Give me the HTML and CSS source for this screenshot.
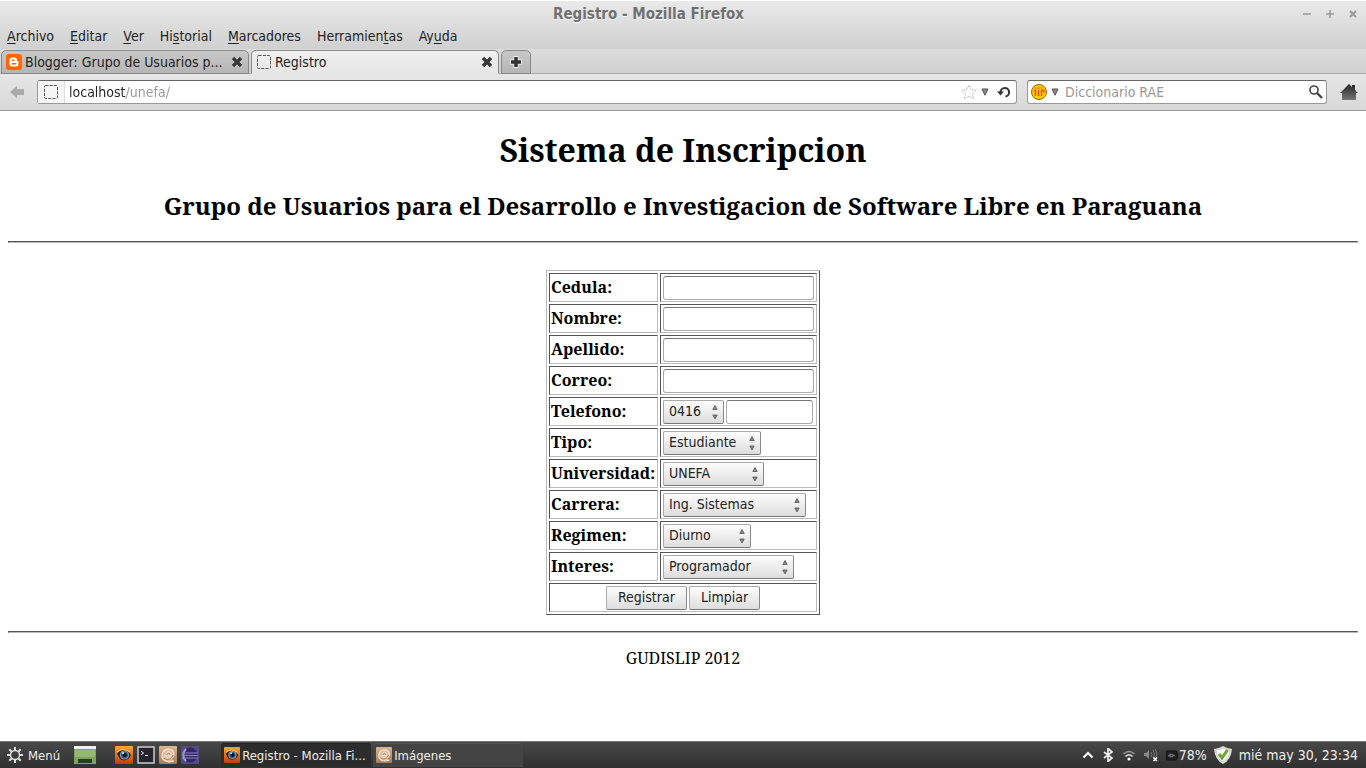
FILE: index.html
```html
<!DOCTYPE html>
<html lang="es">
<head>
  <meta charset="UTF-8">
  <title>Registro</title>
  <link rel="stylesheet" href="styles.css">
</head>
<body>
  <!-- Shared icons -->
  <svg class="sprite" aria-hidden="true">
    <defs>
      <linearGradient id="orange" x1="0" y1="0" x2="0" y2="1"><stop offset="0" stop-color="#f9a832"/><stop offset="1" stop-color="#c43c06"/></linearGradient>
      <linearGradient id="sand" x1="0" y1="0" x2="0" y2="1"><stop offset="0" stop-color="#d9b795"/><stop offset="1" stop-color="#a97b55"/></linearGradient>
      <linearGradient id="dark" x1="0" y1="0" x2="0" y2="1"><stop offset="0" stop-color="#222"/><stop offset="1" stop-color="#777"/></linearGradient>
      <symbol id="eye" viewBox="0 0 18 18">
        <rect width="18" height="18" rx="1" fill="url(#orange)"/>
        <path d="M2 8C5 3 12 2 16 9C14 14 9 16 5 13Z" fill="#33261c"/>
        <path d="M2 6Q8 1 15 6" fill="none" stroke="#ffd06a"/>
        <circle cx="9.500" cy="9" r="4.600" fill="#7d9cc0"/>
        <circle cx="9.500" cy="9" r="3.500" fill="#35587f"/>
        <circle cx="9.500" cy="9" r="2" fill="#080b12"/>
        <circle cx="8" cy="7" r="1" fill="#dce9f5"/>
      </symbol>
      <symbol id="shell" viewBox="0 0 18 18">
        <rect width="18" height="18" rx="1" fill="url(#sand)"/>
        <path d="M15 15C5 18 1 12 4 6C7 1 15 3 15 8C15 13 8 14 7 9C7 6 11 5 12 8C12 10 10 11 9 9" fill="#dcc0a4" stroke="#f3e4d3" stroke-width="1.200"/>
        <path d="M5 12C8 15 13 13 14 9M8 9C8 7 11 6 11 9" fill="none" stroke="#a77b5b"/>
      </symbol>
      <symbol id="arrows" viewBox="0 0 6 16"><path d="M.8 5.500L3 1.500L5.200 5.500ZM.8 11L3 15L5.200 11Z" fill="#888" stroke="#555" stroke-width=".8"/></symbol>
      <symbol id="down" viewBox="0 0 8 8"><path d="M1 1H7L4 7.200Z" fill="#888" stroke="#555"/></symbol>
      <symbol id="close" viewBox="0 0 12 12"><path d="M3 3L9 9M9 3L3 9" stroke="#fff" stroke-width="5" opacity=".4"/><path d="M2 2L10 10M10 2L2 10" stroke="#383838" stroke-width="3.500"/></symbol>
      <symbol id="blank" viewBox="0 0 14 14"><rect x=".5" y=".5" width="13" height="13" rx="1" fill="none" stroke="#555" stroke-dasharray="3 1.300"/></symbol>
    </defs>
  </svg>

  <!-- Browser window -->
  <header class="browser">
    <div class="titlebar">
      <span class="title">Registro - Mozilla Firefox</span>
      <div class="window-buttons">
        <button aria-label="Minimizar"><svg viewBox="0 0 8 8"><path d="M0 4H8" stroke="#999" stroke-width="1.500"/></svg></button>
        <button aria-label="Maximizar"><svg viewBox="0 0 8 8"><path d="M0 4H8M4 0V8" stroke="#999" stroke-width="1.500"/></svg></button>
        <button aria-label="Cerrar"><svg viewBox="0 0 8 8"><path d="M1 1L7 7M7 1L1 7" stroke="#999" stroke-width="2"/></svg></button>
      </div>
    </div>

    <nav class="menubar">
      <a href="#"><u>A</u>rchivo</a>
      <a href="#"><u>E</u>ditar</a>
      <a href="#"><u>V</u>er</a>
      <a href="#">Hi<u>s</u>torial</a>
      <a href="#"><u>M</u>arcadores</a>
      <a href="#">Herramien<u>t</u>as</a>
      <a href="#">Ay<u>u</u>da</a>
    </nav>

    <div class="tabs">
      <div class="tab">
        <svg class="icon16" viewBox="0 0 16 16"><rect width="16" height="16" rx="3" fill="#f60"/><path d="M6 3.500H8.500Q11 3.500 11 6V6.500Q11 7 11.500 7H12Q12.500 7 12.500 8V10Q12.500 12.500 10 12.500H6Q3.500 12.500 3.500 10V6Q3.500 3.500 6 3.500Z" fill="#fff"/><path d="M6.200 6.200H8M6.200 9.800H9.800" stroke="#f60" stroke-width="1.400" stroke-linecap="round"/></svg>
        <span class="tab-label">Blogger: Grupo de Usuarios p...</span>
        <button aria-label="Cerrar pestaña"><svg class="icon12"><use href="#close"/></svg></button>
      </div>
      <div class="tab active">
        <svg class="icon14"><use href="#blank"/></svg>
        <span class="tab-label">Registro</span>
        <button aria-label="Cerrar pestaña"><svg class="icon12"><use href="#close"/></svg></button>
      </div>
      <button class="new-tab" aria-label="Nueva pestaña"><svg class="icon12" viewBox="0 0 12 12"><path d="M6 0V12M0 6H12" stroke="#eee" stroke-width="5"/><path d="M6 1V11M1 6H11" stroke="#333" stroke-width="3.500"/></svg></button>
    </div>

    <div class="navbar">
      <button class="back" aria-label="Atrás"><svg viewBox="0 0 14 12"><path d="M0 6L7 0V3H14V9H7V12Z" fill="#aaa"/></svg></button>
      <div class="field url">
        <span class="identity"><svg class="icon14"><use href="#blank"/></svg></span>
        <input type="text" value="localhost/unefa/" aria-label="Dirección">
        <svg class="icon16" viewBox="0 0 16 16"><path d="M8 1L10.200 5.600L15.200 6.200L11.500 9.600L12.500 14.700L8 12.200L3.500 14.700L4.500 9.600L.8 6.200L5.800 5.600Z" fill="#fff" stroke="#ccc"/></svg>
        <svg class="icon8"><use href="#down"/></svg>
        <button aria-label="Recargar"><svg class="icon14" viewBox="0 0 14 14"><path d="M3.500 7A4.300 4.300 0 1 1 8.500 11.500" fill="none" stroke="#333" stroke-width="2"/><path d="M0 6.500H7L3.500 10.500Z" fill="#333"/></svg></button>
      </div>
      <div class="field search">
        <svg class="icon16" viewBox="0 0 16 16"><circle cx="8" cy="8" r="7.500" fill="#fc0" stroke="#a76000"/><path d="M3 6.500H5M4.500 6V12M7.500 6V12M10.500 6V12M10 6.500H13V8.500" fill="none" stroke="#f04a10" stroke-width="1.400"/><path d="M4 4.200H5.500M7 4.200H8.500M10 4.200H11.500" stroke="#f04a10" stroke-width="1.200"/></svg>
        <svg class="icon8"><use href="#down"/></svg>
        <input type="text" placeholder="Diccionario RAE" aria-label="Buscar">
        <button aria-label="Buscar"><svg class="icon14" viewBox="0 0 14 14"><circle cx="5" cy="5" r="4" fill="none" stroke="#444" stroke-width="1.600"/><path d="M8 8L13 13" stroke="#444" stroke-width="2.400"/></svg></button>
      </div>
      <button class="home" aria-label="Inicio"><svg viewBox="0 0 18 16"><path d="M0 9L9 0L12 3V1H15V6L18 9H16V16H2V9Z" fill="url(#dark)"/></svg></button>
    </div>
  </header>

  <!-- Page -->
  <main>
    <h1>Sistema de Inscripcion</h1>
    <h2>Grupo de Usuarios para el Desarrollo e Investigacion de Software Libre en Paraguana</h2>
    <hr>
    <form>
      <table>
        <tr><th><label for="cedula">Cedula:</label></th><td><input type="text" id="cedula"></td></tr>
        <tr><th><label for="nombre">Nombre:</label></th><td><input type="text" id="nombre"></td></tr>
        <tr><th><label for="apellido">Apellido:</label></th><td><input type="text" id="apellido"></td></tr>
        <tr><th><label for="correo">Correo:</label></th><td><input type="text" id="correo"></td></tr>
        <tr>
          <th><label for="telefono">Telefono:</label></th>
          <td>
            <div class="phone">
              <span class="select codigo"><select aria-label="Codigo"><option>0416</option></select><svg><use href="#arrows"/></svg></span>
              <input type="text" id="telefono">
            </div>
          </td>
        </tr>
        <tr><th><label for="tipo">Tipo:</label></th><td><span class="select tipo"><select id="tipo"><option>Estudiante</option></select><svg><use href="#arrows"/></svg></span></td></tr>
        <tr><th><label for="universidad">Universidad:</label></th><td><span class="select universidad"><select id="universidad"><option>UNEFA</option></select><svg><use href="#arrows"/></svg></span></td></tr>
        <tr><th><label for="carrera">Carrera:</label></th><td><span class="select carrera"><select id="carrera"><option>Ing. Sistemas</option></select><svg><use href="#arrows"/></svg></span></td></tr>
        <tr><th><label for="regimen">Regimen:</label></th><td><span class="select regimen"><select id="regimen"><option>Diurno</option></select><svg><use href="#arrows"/></svg></span></td></tr>
        <tr><th><label for="interes">Interes:</label></th><td><span class="select interes"><select id="interes"><option>Programador</option></select><svg><use href="#arrows"/></svg></span></td></tr>
        <tr><td colspan="2"><div class="actions"><button type="submit">Registrar</button><button type="reset">Limpiar</button></div></td></tr>
      </table>
    </form>
    <hr>
    <p>GUDISLIP 2012</p>
  </main>

  <!-- Desktop panel -->
  <footer class="panel">
    <button class="menu">
      <svg class="icon16" viewBox="0 0 16 16"><circle cx="8" cy="8" r="4.500" fill="none" stroke="#ddd" stroke-width="1.500"/><path d="M8 0V3M8 13V16M0 8H3M13 8H16M2.300 2.300L4.500 4.500M11.500 11.500L13.700 13.700M2.300 13.700L4.500 11.500M11.500 4.500L13.700 2.300" stroke="#ddd" stroke-width="2"/></svg>
      Menú
    </button>
    <button class="desktop" aria-label="Mostrar escritorio"><svg viewBox="0 0 22 18"><rect width="22" height="18" fill="#7da45b"/><path d="M0 0H22V3H0Z" fill="#eee"/><path d="M1 4H21V11H1Z" fill="#93b970"/><path d="M4 17V13H18V17Z" fill="#294020"/></svg></button>
    <div class="launchers">
      <button aria-label="Firefox"><svg class="icon18"><use href="#eye"/></svg></button>
      <button aria-label="Terminal"><svg class="icon18" viewBox="0 0 18 18"><rect x="1" y="1" width="16" height="16" fill="#28222d" stroke="#ccc" stroke-width="1.500"/><path d="M4 5L6.500 7L4 9M8 9.500H11" fill="none" stroke="#fff"/></svg></button>
      <button aria-label="Imágenes"><svg class="icon18"><use href="#shell"/></svg></button>
      <button aria-label="Eclipse"><svg class="icon18" viewBox="0 0 18 18"><rect width="18" height="18" rx="1" fill="#56498a"/><circle cx="9" cy="9" r="7.500" fill="#30285f"/><path d="M5 3A8 8 0 0 0 5 15" fill="none" stroke="#a99bd5" stroke-width="2"/><path d="M1 7H17M1 9.500H17M1 12H17" stroke="#8f87c8"/></svg></button>
    </div>
    <div class="tasks">
      <button class="task current"><svg class="icon16"><use href="#eye"/></svg>Registro - Mozilla Fi...</button>
      <button class="task"><svg class="icon16"><use href="#shell"/></svg>Imágenes</button>
    </div>
    <div class="tray">
      <svg class="icon12" viewBox="0 0 12 12"><path d="M1.500 8.500L6 4L10.500 8.500" fill="none" stroke="#fff" stroke-width="2"/></svg>
      <svg class="icon14" viewBox="0 0 14 14"><path d="M3 4L11 10L7 13.500V.5L11 4L3 10" fill="none" stroke="#eee" stroke-width="1.700"/></svg>
      <svg class="icon14" viewBox="0 0 14 14"><path d="M1.500 6Q7 1 12.500 6" fill="none" stroke="#999" stroke-width="1.500"/><path d="M3.500 8.500Q7 5 10.500 8.500" fill="none" stroke="#ddd" stroke-width="1.500"/><circle cx="7" cy="11" r="1.600" fill="#fff"/></svg>
      <svg class="icon16" viewBox="0 0 16 16"><path d="M1 6H3L6 3V12L3 9H1Z" fill="#888"/><path d="M8 5Q10 7.500 8 10M10 3Q13 7.500 10 11M12 2Q15.500 6 13 10" fill="none" stroke="#777"/><path d="M10.500 10.500L14 14M14 10.500L10.500 14" stroke="#fff" stroke-width="1.700"/></svg>
      <span class="battery"><svg class="icon12" viewBox="0 0 12 12"><path d="M.5 2H10.500V4H11.500V9H10.500V11H.5Z" fill="#222" stroke="#111"/><path d="M2 6.500H4M4 4.500V8.500M4 5.500H7V7.500H4M7 6.500H9" fill="none" stroke="#777"/></svg>78%</span>
      <svg class="icon18" viewBox="0 0 18 18"><path d="M9 0Q13 2.500 18 3Q17 14 9 18Q1 14 0 3Q5 2.500 9 0Z" fill="#ddd"/><path d="M9 2Q12 4 16 4Q15 13 9 16Q3 13 2 4Q6 4 9 2Z" fill="#f4f4f4" stroke="#bbb" stroke-width=".5"/><path d="M5 8L8 12L13.500 4" fill="none" stroke="#6ea52f" stroke-width="3"/></svg>
      <span class="clock">mié may 30, 23:34</span>
    </div>
  </footer>
</body>
</html>
```

FILE: styles.css
```css
* {
  box-sizing: border-box;
}

body {
  margin: 0;
  min-height: 100vh;
  display: flex;
  flex-direction: column;
  background: #fff;
  color: #000;
  font-family: "DejaVu Sans Condensed", "DejaVu Sans", sans-serif;
  font-size: 14px;
}

button, input, select {
  font: inherit;
  color: #222;
  margin: 0;
}

button {
  padding: 0;
  border: 0;
  background: none;
}

svg {
  display: block;
  flex: none;
}

.sprite {
  position: absolute;
  width: 0;
  height: 0;
}

.icon8 { width: 8px; height: 8px; }
.icon12 { width: 12px; height: 12px; }
.icon14 { width: 14px; height: 14px; }
.icon16 { width: 16px; height: 16px; }
.icon18 { width: 18px; height: 18px; }

/* Browser window */
.browser {
  background: linear-gradient(#eaeaea, #d0d0d0 49px, #d9d9d9 49px);
  color: #222;
}

.titlebar {
  height: 26px;
  display: flex;
  align-items: center;
  padding-right: 9px;
  border-top: 1px solid #fff;
}

.title {
  flex: 1;
  text-align: center;
  font-size: 15px;
  line-height: 18px;
  font-weight: bold;
  color: #707070;
  text-shadow: 0 1px #fff;
}

.window-buttons {
  display: flex;
  gap: 15px;
  margin-left: 6px;
}

.titlebar svg {
  width: 8px;
  height: 8px;
}

.menubar {
  height: 23px;
  display: flex;
  gap: 16px;
  padding: 0 7px;
  line-height: 20px;
}

.menubar a {
  color: #222;
  text-decoration: none;
}

.menubar u {
  text-underline-offset: 2px;
}

.tabs {
  height: 25px;
  display: flex;
  gap: 2px;
  padding: 1px 1px 0;
  background: linear-gradient(#dcdcdc, #d0d0d0);
  box-shadow: inset 0 -1px #aaa;
}

.tab, .new-tab {
  height: 24px;
  border: 1px solid #888;
  border-radius: 5px 5px 0 0;
  background: linear-gradient(#c8c8c8, #b5b5b5);
}

.tab {
  width: 248px;
  display: flex;
  align-items: center;
  gap: 3px;
  padding: 0 5px 0 4px;
}

.tab.active {
  border-bottom-color: #e6e6e6;
  background: linear-gradient(#f0f0f0, #e6e6e6);
  gap: 4px;
  padding-left: 5px;
}

.tab-label {
  flex: 1;
  overflow: hidden;
  white-space: nowrap;
}

.new-tab {
  width: 30px;
  display: flex;
  align-items: center;
  justify-content: center;
}

.navbar {
  height: 37px;
  display: flex;
  align-items: center;
  gap: 10px;
  padding: 0 8px 1px 10px;
  background: linear-gradient(#e6e6e6, #d8d8d8);
  border-bottom: 1px solid #999;
}

.back {
  width: 17px;
}

.back svg {
  width: 14px;
  height: 12px;
}

.home {
  margin-left: 3px;
}

.home svg {
  width: 18px;
  height: 16px;
}

.field {
  height: 24px;
  display: flex;
  align-items: center;
  border: 1px solid #999;
  border-top-color: #666;
  border-radius: 3px;
  background: #fff;
}

.field input {
  flex: 1;
  min-width: 0;
  padding: 0;
  border: 0;
  background: none;
}

.field input::placeholder {
  color: #999;
}

.url {
  flex: 1;
  gap: 4px;
  padding-right: 5px;
}

/* host name dark, path grey */
.field.url input {
  color: transparent;
  background: linear-gradient(to right, #222 57px, #999 57px);
  background-clip: text;
}

.identity {
  align-self: stretch;
  width: 27px;
  display: grid;
  place-items: center;
  background: #f5f5f5;
  border-right: 1px solid #ddd;
}

.url button {
  margin-left: 4px;
}

.search {
  width: 300px;
  gap: 4px;
  padding: 0 3px;
}

.search input {
  margin-left: 2px;
}

/* Page */
main {
  flex: 1;
  padding: 16px 8px;
  font-family: "Droid Serif", "Noto Serif", "DejaVu Serif Condensed", "DejaVu Serif", serif;
  font-size: 16px;
  text-align: center;
}

h1 {
  margin: 0 0 17px;
  font-size: 32px;
  line-height: 46px;
}

h2 {
  margin: 0 0 19px;
  font-size: 24px;
  line-height: 32px;
}

hr {
  height: 2px;
  margin: 0;
  border: 1px solid;
  border-color: #555 #bbb #bbb #555;
}

p {
  margin: 15px 0;
  line-height: 20px;
}

table {
  width: 274px;
  margin: 27px auto 16px;
  border: 1px solid;
  border-color: #bbb #555 #555 #bbb;
  border-spacing: 2px;
  table-layout: fixed;
}

th, td {
  height: 29px;
  padding: 1px;
  border: 1px solid;
  border-color: #555 #bbb #bbb #555;
  text-align: left;
  line-height: 20px;
}

th {
  width: 109px;
  padding-bottom: 3px;
  white-space: nowrap;
}

td {
  padding: 2px 2px 1px;
}

td input, .select, .actions button {
  display: block;
  height: 24px;
  font-family: "DejaVu Sans Condensed", "DejaVu Sans", sans-serif;
  font-size: 14px;
}

td input {
  width: 151px;
  padding: 0 4px;
  border: 1px solid #aaa;
  border-top-color: #777;
  border-radius: 3px;
  background: #fff;
}

.phone {
  display: flex;
  gap: 2px;
}

.phone input {
  width: 87px;
}

.select {
  position: relative;
}

.select select {
  width: 100%;
  height: 24px;
  padding: 0 5px 2px;
  appearance: none;
}

.select select, .actions button {
  border: 1px solid #999;
  border-color: #aaa #888 #777 #aaa;
  border-radius: 2px;
  background: linear-gradient(#fdfdfd, #ddd);
}

.select svg {
  position: absolute;
  top: 4px;
  right: 6px;
  width: 6px;
  height: 16px;
  pointer-events: none;
}

.codigo { width: 61px; }
.tipo { width: 98px; }
.universidad { width: 101px; }
.carrera { width: 143px; }
.regimen { width: 88px; }
.interes { width: 131px; }

.actions {
  display: flex;
  justify-content: center;
  gap: 2px;
}

.actions button {
  padding: 0 11px 2px;
}

/* Desktop panel */
.panel {
  height: 27px;
  display: flex;
  align-items: center;
  padding: 0 8px 0 7px;
  border-top: 1px solid #777;
  background: linear-gradient(#484848, #303030);
  color: #eee;
  font-size: 13px;
}

.panel button {
  display: flex;
  align-items: center;
  color: #eee;
}

.menu {
  gap: 5px;
}

.desktop {
  margin: 0 19px 0 14px;
}

.desktop svg {
  width: 22px;
  height: 18px;
}

.launchers {
  display: flex;
  gap: 4px;
}

.tasks {
  flex: 1;
  display: flex;
  gap: 2px;
  margin-left: 22px;
}

.task {
  width: 150px;
  height: 24px;
  gap: 2px;
  padding: 0 3px;
  border-radius: 4px 4px 0 0;
  background: #444;
  box-shadow: inset 0 1px #555;
  white-space: nowrap;
}

.task.current {
  background: #2c2c2c;
  box-shadow: inset 0 1px #222;
}

.tray {
  display: flex;
  align-items: center;
  gap: 7px;
  font-size: 14px;
}

.battery {
  display: flex;
  align-items: center;
  gap: 1px;
}
```
